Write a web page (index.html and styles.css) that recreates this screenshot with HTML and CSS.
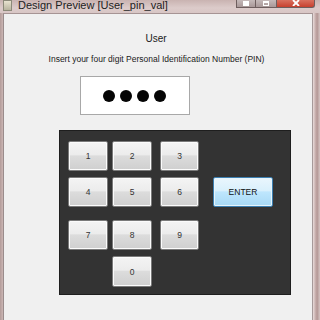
FILE: index.html
```html
<!DOCTYPE html>
<html>
<head>
<meta charset="utf-8">
<link rel="stylesheet" href="styles.css">
</head>
<body>
<div class="window">
  <div class="titlebar">
    <div class="app-icon"></div>
    <div class="title">Design Preview [User_pin_val]</div>
    <div class="controls">
      <div class="ctl min"><span class="min-glyph"></span></div>
      <div class="ctl max"><span class="max-glyph"></span></div>
      <div class="ctl close">
        <svg class="close-glyph" width="8" height="6" viewBox="0 0 8 6"><path d="M1 0 L7 6 M7 0 L1 6" stroke="#fff" stroke-width="1.8"/></svg>
      </div>
    </div>
  </div>
  <div class="frame">
    <div class="frame-left"></div>
    <div class="content">
      <div class="user">User</div>
      <div class="prompt">Insert your four digit Personal Identification Number (PIN)</div>
      <div class="pin-box">
        <span class="dot"></span><span class="dot"></span><span class="dot"></span><span class="dot"></span>
      </div>
      <div class="panel">
        <div class="keypad">
          <button class="key c1 r1">1</button>
          <button class="key c2 r1">2</button>
          <button class="key c3 r1">3</button>
          <button class="key c1 r2">4</button>
          <button class="key c2 r2">5</button>
          <button class="key c3 r2">6</button>
          <button class="enter r2">ENTER</button>
          <button class="key c1 r3">7</button>
          <button class="key c2 r3">8</button>
          <button class="key c3 r3">9</button>
          <button class="key c2 r4">0</button>
        </div>
      </div>
    </div>
    <div class="frame-right"></div>
  </div>
</div>
</body>
</html>
```
FILE: styles.css
```css
html, body {
  margin: 0;
  padding: 0;
  width: 320px;
  height: 320px;
  overflow: hidden;
}
.window {
  width: 320px;
  height: 320px;
  display: flex;
  flex-direction: column;
  background: #cdb7b5;
  font-family: "Liberation Sans", Arial, sans-serif;
}
.titlebar {
  height: 13px;
  display: flex;
  align-items: flex-start;
  background: linear-gradient(to bottom, #c9b3b1, #dccbca 60%, #d8c6c5);
  position: relative;
  flex: none;
}
.app-icon {
  width: 9px;
  height: 11px;
  margin: 0 0 0 3px;
  background: linear-gradient(to bottom, #e8e3d0, #b8b49e);
  border: 1px solid #8c8a7a;
  box-sizing: border-box;
}
.title {
  margin-left: 6px;
  margin-top: 0;
  font-size: 11px;
  line-height: 10px;
  color: #222;
}
.controls {
  position: absolute;
  top: 0;
  left: 236px;
  display: flex;
  height: 8px;
}
.ctl {
  height: 8px;
  box-sizing: border-box;
  border: 1px solid #6e5e5e;
  border-top: none;
  display: flex;
  justify-content: center;
}
.min, .max {
  width: 20px;
  background: linear-gradient(to bottom, #c5b9b9, #a99898);
}
.max { width: 21px; border-left: none; }
.close {
  width: 38px;
  border-left: none;
  border-radius: 0 0 3px 0;
  background: linear-gradient(to bottom, #d9705f, #c7412f);
}
.min-glyph {
  width: 6px;
  height: 5px;
  background: #fff;
  margin-top: 1px;
}
.max-glyph {
  width: 6px;
  height: 5px;
  border: 1px solid #fff;
  border-top-width: 2px;
  box-sizing: border-box;
  margin-top: 1px;
}
.close-glyph {
  display: block;
  margin-top: 0;
}
.frame {
  flex: 1;
  display: flex;
}
.frame-left {
  width: 3px;
  background: linear-gradient(to right, #b39c9a, #cbb6b4);
}
.frame-right {
  width: 7px;
  background: linear-gradient(to right, #e9dcdb, #c3a9a7 40%, #b49896 60%, #d5c4c3);
}
.content {
  width: 310px;
  background: #f0f0f0;
  border-top: 1px solid #a69494;
  border-left: 1px solid #9a8c8c;
  border-right: 1px solid #a69a9a;
  box-sizing: border-box;
  display: flex;
  flex-direction: column;
  align-items: flex-start;
  color: #1a1a1a;
}
.user {
  align-self: stretch;
  text-align: center;
  font-size: 10px;
  line-height: 12px;
  margin-top: 19px;
  padding-right: 4px;
}
.prompt {
  align-self: stretch;
  text-align: center;
  font-size: 8.5px;
  line-height: 12px;
  margin-top: 8px;
  padding-right: 3px;
}
.pin-box {
  margin-top: 11px;
  margin-left: 76px;
  width: 110px;
  height: 39px;
  box-sizing: border-box;
  background: #fff;
  border: 1px solid #a8a8a8;
  display: flex;
  align-items: center;
  justify-content: flex-start;
  padding-left: 22px;
  gap: 5px;
}
.dot {
  width: 12px;
  height: 12px;
  border-radius: 50%;
  background: #050505;
}
.panel {
  margin-top: 15px;
  margin-left: 55px;
  width: 232px;
  height: 165px;
  box-sizing: border-box;
  background: #333333;
  border: 1px solid #1e1e1e;
  padding: 10px 0 0 8px;
}
.keypad {
  display: grid;
  grid-template-columns: 40px 4px 40px 8px 39px 14px 60px;
  grid-template-rows: 30px 6px 30px 13px 30px 6px 31px;
}
.key, .enter {
  margin: 0;
  padding: 0;
  box-sizing: border-box;
  font-family: "Liberation Sans", Arial, sans-serif;
  font-size: 8.5px;
  color: #333;
  border: 1px solid #7a7a7a;
  border-radius: 2px;
  box-shadow: inset 0 0 0 1px #fbfbfb;
  background: linear-gradient(to bottom, #f4f4f4 0%, #ececec 45%, #dcdcdc 50%, #cfcfcf 100%);
}
.enter {
  grid-column: 7;
  border-color: #3c7fb1;
  box-shadow: inset 0 0 0 1px #e6f5fc;
  background: linear-gradient(to bottom, #eaf6fd 0%, #d9f0fc 45%, #bee6fd 50%, #a7d9f5 100%);
  color: #111;
}
.c1 { grid-column: 1; }
.c2 { grid-column: 3; }
.c3 { grid-column: 5; }
.r1 { grid-row: 1; }
.r2 { grid-row: 3; }
.r3 { grid-row: 5; }
.r4 { grid-row: 7; }
```
